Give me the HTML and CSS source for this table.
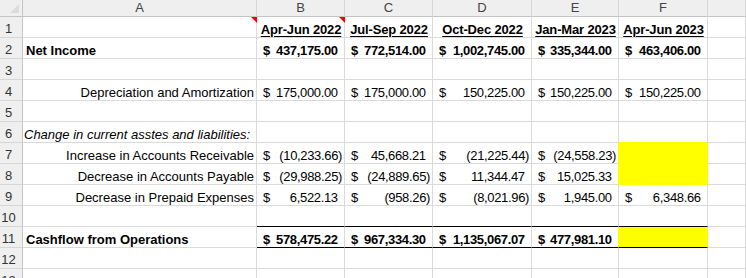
FILE: index.html
```html
<!DOCTYPE html>
<html lang="en">
<head>
<meta charset="utf-8">
<title>Cashflow</title>
<link rel="stylesheet" href="styles.css">
</head>
<body>
<div class="sheet">
  <div class="corner"><span class="corner-tri"></span></div>
  <div class="ch">A</div><div class="ch">B</div><div class="ch">C</div><div class="ch">D</div><div class="ch">E</div><div class="ch">F</div><div class="ch"></div>

  <div class="rh">1</div>
  <div class="c note"><span class="tri"></span></div>
  <div class="c hd note"><span>Apr-Jun 2022</span><span class="tri"></span></div>
  <div class="c hd"><span>Jul-Sep 2022</span></div>
  <div class="c hd"><span>Oct-Dec 2022</span></div>
  <div class="c hd"><span>Jan-Mar 2023</span></div>
  <div class="c hd"><span>Apr-Jun 2023</span></div>
  <div class="c"></div>

  <div class="rh">2</div>
  <div class="c b">Net Income</div>
  <div class="c v b"><span>$</span><span class="n p">437,175.00</span></div>
  <div class="c v b"><span>$</span><span class="n p">772,514.00</span></div>
  <div class="c v b"><span>$</span><span class="n p">1,002,745.00</span></div>
  <div class="c v b"><span>$</span><span class="n p">335,344.00</span></div>
  <div class="c v b"><span>$</span><span class="n p">463,406.00</span></div>
  <div class="c"></div>

  <div class="rh">3</div>
  <div class="c"></div><div class="c"></div><div class="c"></div><div class="c"></div><div class="c"></div><div class="c"></div><div class="c"></div>

  <div class="rh">4</div>
  <div class="c r">Depreciation and Amortization</div>
  <div class="c v"><span>$</span><span class="n p">175,000.00</span></div>
  <div class="c v"><span>$</span><span class="n p">175,000.00</span></div>
  <div class="c v"><span>$</span><span class="n p">150,225.00</span></div>
  <div class="c v"><span>$</span><span class="n p">150,225.00</span></div>
  <div class="c v"><span>$</span><span class="n p">150,225.00</span></div>
  <div class="c"></div>

  <div class="rh">5</div>
  <div class="c"></div><div class="c"></div><div class="c"></div><div class="c"></div><div class="c"></div><div class="c"></div><div class="c"></div>

  <div class="rh">6</div>
  <div class="c i">Change in current asstes and liabilities:</div>
  <div class="c"></div><div class="c"></div><div class="c"></div><div class="c"></div><div class="c yb-bottom"></div><div class="c"></div>

  <div class="rh">7</div>
  <div class="c r">Increase in Accounts Receivable</div>
  <div class="c v"><span>$</span><span class="n">(10,233.66)</span></div>
  <div class="c v"><span>$</span><span class="n p">45,668.21</span></div>
  <div class="c v"><span>$</span><span class="n">(21,225.44)</span></div>
  <div class="c v yb-right"><span>$</span><span class="n">(24,558.23)</span></div>
  <div class="c y"></div>
  <div class="c"></div>

  <div class="rh">8</div>
  <div class="c r">Decrease in Accounts Payable</div>
  <div class="c v"><span>$</span><span class="n">(29,988.25)</span></div>
  <div class="c v"><span>$</span><span class="n">(24,889.65)</span></div>
  <div class="c v"><span>$</span><span class="n p">11,344.47</span></div>
  <div class="c v yb-right"><span>$</span><span class="n p">15,025.33</span></div>
  <div class="c y"></div>
  <div class="c"></div>

  <div class="rh">9</div>
  <div class="c r">Decrease in Prepaid Expenses</div>
  <div class="c v"><span>$</span><span class="n p">6,522.13</span></div>
  <div class="c v"><span>$</span><span class="n">(958.26)</span></div>
  <div class="c v"><span>$</span><span class="n">(8,021.96)</span></div>
  <div class="c v"><span>$</span><span class="n p">1,945.00</span></div>
  <div class="c v"><span>$</span><span class="n p">6,348.66</span></div>
  <div class="c"></div>

  <div class="rh">10</div>
  <div class="c"></div>
  <div class="c line"></div><div class="c line"></div><div class="c line"></div><div class="c line"></div><div class="c line"></div>
  <div class="c"></div>

  <div class="rh">11</div>
  <div class="c b">Cashflow from Operations</div>
  <div class="c v b line"><span>$</span><span class="n p">578,475.22</span></div>
  <div class="c v b line"><span>$</span><span class="n p">967,334.30</span></div>
  <div class="c v b line"><span>$</span><span class="n p">1,135,067.07</span></div>
  <div class="c v b line yb-right"><span>$</span><span class="n p">477,981.10</span></div>
  <div class="c line y"></div>
  <div class="c"></div>

  <div class="rh">12</div>
  <div class="c"></div><div class="c"></div><div class="c"></div><div class="c"></div><div class="c"></div><div class="c"></div><div class="c"></div>

  <div class="rh">13</div>
  <div class="c"></div><div class="c"></div><div class="c"></div><div class="c"></div><div class="c"></div><div class="c"></div><div class="c"></div>
</div>
</body>
</html>
```

FILE: styles.css
```css
html, body {
  margin: 0;
  padding: 0;
  background: #ffffff;
  overflow: hidden;
}

.sheet {
  display: grid;
  grid-template-columns: 23px 234px 88px 88px 99px 87px 89px 1fr;
  grid-template-rows: 17px;
  grid-auto-rows: 21px;
  width: 746px;
  font-family: "Liberation Sans", Arial, sans-serif;
  font-size: 13px;
  color: #000;
}

.sheet > div {
  box-sizing: border-box;
  position: relative;
  min-width: 0;
}

.corner {
  background: #efefef;
  border-right: 1px solid #c4c4c4;
  border-bottom: 1px solid #c4c4c4;
}

.corner-tri {
  position: absolute;
  right: 3px;
  bottom: 3px;
  width: 0;
  height: 0;
  border-left: 9px solid transparent;
  border-bottom: 9px solid #dcdcdc;
}

.ch {
  background: #efefef;
  border-right: 1px solid #d6d6d6;
  border-bottom: 1px solid #c4c4c4;
  color: #444;
  display: flex;
  align-items: center;
  justify-content: center;
  font-size: 13px;
  line-height: 16px;
}

.rh {
  background: #efefef;
  border-right: 1px solid #c4c4c4;
  border-bottom: 1px solid #d6d6d6;
  color: #333;
  display: flex;
  align-items: center;
  justify-content: center;
  padding-right: 5px;
  padding-top: 2px;
  line-height: 15px;
}

.c {
  border-right: 1px solid #dadada;
  border-bottom: 1px solid #dadada;
  display: flex;
  align-items: flex-end;
  line-height: 15px;
  padding: 0 2px 0 3px;
  white-space: nowrap;
}

.r {
  justify-content: flex-end;
}

.b {
  font-weight: bold;
}

.i {
  font-style: italic;
  padding-left: 1px;
}

.hd {
  justify-content: center;
  font-weight: bold;
  text-decoration: underline;
  text-underline-offset: 2px;
  letter-spacing: -0.15px;
}

.v {
  justify-content: space-between;
  padding: 0 2px 0 6px;
}

.n {
  letter-spacing: -0.35px;
}

.p {
  padding-right: 0.333em;
}

.tri {
  position: absolute;
  top: 0;
  right: -1px;
  width: 0;
  height: 0;
  border-top: 6px solid #ff0000;
  border-left: 6px solid transparent;
}

.y {
  background: #ffff00;
  border-right-color: #ffff00;
  border-bottom-color: #ffff00;
}

.yb-bottom {
  border-bottom-color: #ffff00;
}

.yb-right {
  border-right-color: #ffff00;
}

.line {
  border-bottom-color: #000000;
}
```
